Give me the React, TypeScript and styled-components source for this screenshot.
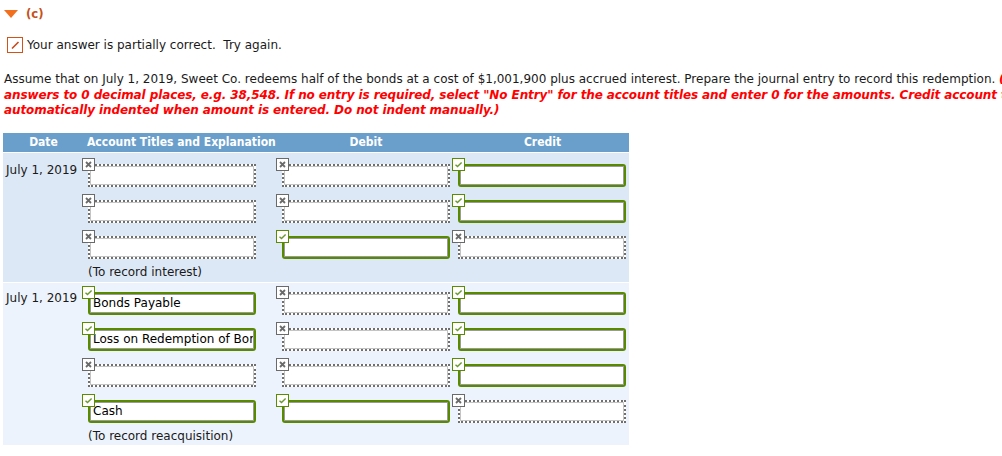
import React from 'react';
import styled, { createGlobalStyle } from 'styled-components';

const GlobalStyle = createGlobalStyle`
  html, body {
    margin: 0;
    padding: 0;
    background: #ffffff;
    overflow: hidden;
  }
  body {
    font-family: "DejaVu Sans", Verdana, sans-serif;
    font-size: 12px;
    color: #1a1a1a;
  }
`;

const Page = styled.div`
  width: 1002px;
  height: 456px;
  overflow: hidden;
  padding: 0 0 0 4px;
  box-sizing: border-box;
`;

const PartHeader = styled.div`
  display: flex;
  align-items: center;
  gap: 8px;
  height: 26px;
`;

const Triangle = styled.span`
  width: 0;
  height: 0;
  border-left: 7px solid transparent;
  border-right: 7px solid transparent;
  border-top: 8px solid #f26f1e;
  margin-top: 1px;
`;

const PartLabel = styled.span`
  font-family: "DejaVu Sans Condensed", "DejaVu Sans", sans-serif;
  font-weight: bold;
  font-size: 13px;
  color: #c5521c;
`;

const Feedback = styled.div`
  display: flex;
  align-items: center;
  gap: 4px;
  margin: 11px 0 0 3px;
  height: 16px;
`;

const FeedbackIcon = styled.span`
  display: inline-flex;
  width: 14px;
  height: 14px;
  border: 1px solid #d2521a;
  background: #fff;
  align-items: center;
  justify-content: center;
`;

const Question = styled.div`
  margin-top: 19px;
  line-height: 15.5px;
`;

const Line = styled.div`
  white-space: nowrap;
`;

const Hint = styled.span`
  color: #ff0000;
  font-weight: bold;
  font-style: italic;
  letter-spacing: -0.1px;
`;

const Table = styled.div`
  margin: 14px 0 0 -1px;
  width: 626px;
`;

const cols = '81px 192px 180px 173px';

const HeaderRow = styled.div`
  display: grid;
  grid-template-columns: ${cols};
  height: 19px;
  align-items: center;
  background: #6a9fcc;
  color: #ffffff;
  font-family: "DejaVu Sans Condensed", "DejaVu Sans", sans-serif;
  font-weight: bold;
`;

const HeaderCell = styled.div<{ align?: string }>`
  text-align: ${p => p.align || 'center'};
  padding-left: ${p => (p.align === 'left' ? '3px' : '0')};
`;

const Section = styled.div<{ tint: string; top: number; bottom: number }>`
  display: grid;
  grid-template-columns: ${cols};
  row-gap: 13px;
  background: ${p => p.tint};
  padding: ${p => p.top}px 0 ${p => p.bottom}px;
  margin-top: 1px;
`;

const DateCell = styled.div`
  padding-left: 3px;
  margin-top: -1px;
  line-height: 15px;
  white-space: nowrap;
`;

const Cell = styled.div<{ offset: number }>`
  padding-left: ${p => p.offset}px;
`;

const Explanation = styled.div`
  grid-column: 2 / span 3;
  padding-left: 4px;
  margin-top: -7px;
  line-height: 15px;
`;

const FieldBox = styled.div<{ ok: boolean }>`
  position: relative;
  width: 168px;
  height: 23px;
  box-sizing: border-box;
  border: ${p => (p.ok ? '2px solid #588a00' : '2px dotted #6f6f6f')};
  border-radius: ${p => (p.ok ? '3px' : '0')};
  background: #ffffff;
`;

const FieldInner = styled.div<{ ok: boolean }>`
  height: 100%;
  box-sizing: border-box;
  border: 1px solid ${p => (p.ok ? '#9a9a9a' : '#c4c4c4')};
  padding-left: 2px;
  line-height: 17px;
  white-space: nowrap;
  overflow: hidden;
  color: #000;
`;

const Badge = styled.span<{ ok: boolean }>`
  position: absolute;
  left: -8px;
  top: -8px;
  width: 11px;
  height: 11px;
  border: 1px solid ${p => (p.ok ? '#5b8c00' : '#6a6a6a')};
  background: #ffffff;
  display: flex;
  align-items: center;
  justify-content: center;
`;

const CheckMark = () => (
  <svg width="9" height="9" viewBox="0 0 9 9">
    <path d="M1.5 4.8 L3.5 6.6 L7.6 2.4" stroke="#6b9a2c" strokeWidth="1.4" fill="none" />
  </svg>
);

const CrossMark = () => (
  <svg width="9" height="9" viewBox="0 0 9 9">
    <path d="M2 2 L7 7 M7 2 L2 7" stroke="#6b6b6b" strokeWidth="1.8" fill="none" />
  </svg>
);

const Field: React.FC<{ ok: boolean; value?: string }> = ({ ok, value }) => (
  <FieldBox ok={ok}>
    <Badge ok={ok}>{ok ? <CheckMark /> : <CrossMark />}</Badge>
    <FieldInner ok={ok}>{value}</FieldInner>
  </FieldBox>
);

interface EntryRow {
  account: { ok: boolean; value?: string };
  debit: boolean;
  credit: boolean;
}

interface Entry {
  date: string;
  rows: EntryRow[];
  note: string;
  tint: string;
  top: number;
  bottom: number;
}

const entries: Entry[] = [
  {
    date: 'July 1, 2019',
    note: '(To record interest)',
    tint: '#dde8f6',
    top: 11,
    bottom: 2,
    rows: [
      { account: { ok: false }, debit: false, credit: true },
      { account: { ok: false }, debit: false, credit: true },
      { account: { ok: false }, debit: true, credit: false },
    ],
  },
  {
    date: 'July 1, 2019',
    note: '(To record reacquisition)',
    tint: '#edf3fc',
    top: 9,
    bottom: 1,
    rows: [
      { account: { ok: true, value: 'Bonds Payable' }, debit: false, credit: true },
      { account: { ok: true, value: 'Loss on Redemption of Bonds' }, debit: false, credit: true },
      { account: { ok: false }, debit: false, credit: true },
      { account: { ok: true, value: 'Cash' }, debit: true, credit: false },
    ],
  },
];

const App: React.FC = () => {
  return (
    <Page>
      <GlobalStyle />
      <PartHeader>
        <Triangle />
        <PartLabel>(c)</PartLabel>
      </PartHeader>
      <Feedback>
        <FeedbackIcon>
          <svg width="10" height="10" viewBox="0 0 10 10">
            <path d="M2 8.5 L8.5 2" stroke="#c8481a" strokeWidth="1.6" />
          </svg>
        </FeedbackIcon>
        <span>Your answer is partially correct.&nbsp; Try again.</span>
      </Feedback>
      <Question>
        <Line>
          Assume that on July 1, 2019, Sweet Co. redeems half of the bonds at a cost of $1,001,900 plus accrued
          interest. Prepare the journal entry to record this redemption. <Hint>(Round</Hint>
        </Line>
        <Line>
          <Hint>
            answers to 0 decimal places, e.g. 38,548. If no entry is required, select "No Entry" for the account titles
            and enter 0 for the amounts. Credit account titles are
          </Hint>
        </Line>
        <Line>
          <Hint>automatically indented when amount is entered. Do not indent manually.)</Hint>
        </Line>
      </Question>
      <Table>
        <HeaderRow>
          <HeaderCell>Date</HeaderCell>
          <HeaderCell align="left">Account Titles and Explanation</HeaderCell>
          <HeaderCell>Debit</HeaderCell>
          <HeaderCell>Credit</HeaderCell>
        </HeaderRow>
        {entries.map((entry, i) => (
          <Section key={i} tint={entry.tint} top={entry.top} bottom={entry.bottom}>
            {entry.rows.map((row, j) => (
              <React.Fragment key={j}>
                <DateCell>{j === 0 ? entry.date : ''}</DateCell>
                <Cell offset={4}>
                  <Field ok={row.account.ok} value={row.account.value} />
                </Cell>
                <Cell offset={6}>
                  <Field ok={row.debit} />
                </Cell>
                <Cell offset={2}>
                  <Field ok={row.credit} />
                </Cell>
              </React.Fragment>
            ))}
            <DateCell />
            <Explanation>{entry.note}</Explanation>
          </Section>
        ))}
      </Table>
    </Page>
  );
};

export default App;
